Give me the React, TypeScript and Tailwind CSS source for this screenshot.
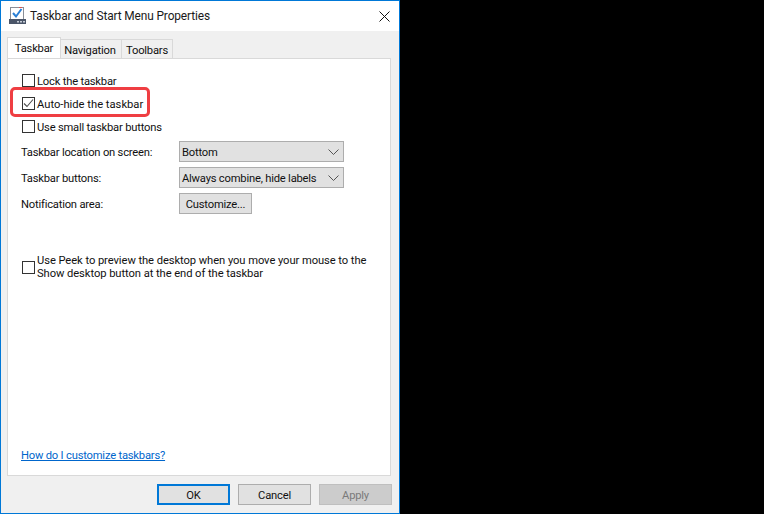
import React from 'react';

const Checkbox = ({ checked = false }: { checked?: boolean }) => (
  <span className="flex h-[13px] w-[13px] shrink-0 items-center justify-center border border-[#333333] bg-white">
    {checked && (
      <svg width="11" height="11" viewBox="0 0 11 11" fill="none" stroke="#4d4d4d" strokeWidth="1.1">
        <path d="M1 5.5 L4 8.5 L10 1.5" />
      </svg>
    )}
  </span>
);

const CheckRow = ({ label, checked, labelClass }: { label: string; checked?: boolean; labelClass?: string }) => (
  <div className="flex h-[13px] items-center gap-[2px] pl-[14px]">
    <Checkbox checked={checked} />
    <span className={`whitespace-nowrap pt-[2px] ${labelClass ?? ''}`}>{label}</span>
  </div>
);

const Chevron = () => (
  <svg width="11" height="6" viewBox="0 0 11 6" fill="none" stroke="#555555" strokeWidth="1">
    <path d="M0.5 0.5 L5.5 5.5 L10.5 0.5" />
  </svg>
);

const Select = ({ value }: { value: string }) => (
  <div className="flex h-[21px] w-[165px] items-center justify-between border border-[#adadad] bg-[#e1e1e1] pl-[2px] pr-[4px]">
    <span className="whitespace-nowrap pt-[1px]">{value}</span>
    <Chevron />
  </div>
);

const FormRow = ({ label, children }: { label: string; children: React.ReactNode }) => (
  <div className="flex h-[21px] items-center pl-[13px]">
    <span className="w-[158px] whitespace-nowrap pt-[2px]">{label}</span>
    {children}
  </div>
);

const FooterButton = ({ label, className }: { label: string; className: string }) => (
  <div className={`flex h-[21px] w-[73px] items-center justify-center pt-[1px] ${className}`}>{label}</div>
);

const App: React.FC = () => {
  return (
    <div className="flex h-[514px] w-[764px] bg-black text-[11.2px] leading-[13px] tracking-[-0.2px] text-[#111111] [font-family:'Roboto','Open_Sans',sans-serif]">
      <div className="flex h-full w-[400px] flex-col border border-[#0078d7] bg-[#f0f0f0]">
        {/* Title bar */}
        <div className="flex h-[30px] shrink-0 items-center bg-white pl-[8px] pr-[9px]">
          <svg width="18" height="18" viewBox="0 0 18 18" className="shrink-0">
            <rect x="1.5" y="0.5" width="13" height="12" fill="#ffffff" stroke="#8a8f98" />
            <rect x="10" y="0" width="3" height="1" fill="#d9534f" />
            <path d="M4 6 L7 9.5 L12.5 2" fill="none" stroke="#2a7fd5" strokeWidth="2" />
            <rect x="0" y="12" width="17" height="5" fill="#4a5568" />
            <rect x="8" y="14" width="2" height="1.5" fill="#c5ccd6" />
            <rect x="11" y="14" width="2" height="1.5" fill="#c5ccd6" />
            <rect x="14" y="14" width="2" height="1.5" fill="#c5ccd6" />
          </svg>
          <span className="ml-[3px] text-[11.9px] tracking-[-0.12px] text-[#1a1a1a]">Taskbar and Start Menu Properties</span>
          <svg width="11" height="11" viewBox="0 0 11 11" stroke="#111111" strokeWidth="1" className="ml-auto">
            <path d="M0.5 0.5 L10.5 10.5 M10.5 0.5 L0.5 10.5" />
          </svg>
        </div>

        {/* Tabs */}
        <div className="relative z-10 mt-[6px] flex h-[21px] items-end pl-[6px]">
          <div className="flex h-[21px] w-[54px] items-center justify-center border border-b-0 border-[#d9d9d9] bg-white">
            Taskbar
          </div>
          <div className="flex h-[19px] w-[61px] items-center justify-center border border-b-0 border-l-0 border-[#d9d9d9] bg-[#f0f0f0] pr-[2px] pt-[2px]">
            Navigation
          </div>
          <div className="flex h-[19px] w-[51px] items-center justify-center border border-b-0 border-l-0 border-[#d9d9d9] bg-[#f0f0f0] pt-[2px]">
            Toolbars
          </div>
        </div>

        {/* Panel */}
        <div className="relative ml-[6px] mr-[8px] flex h-[418px] flex-col border border-[#d9d9d9] bg-white pt-[15px]">
          <div className="flex flex-col gap-[10px]">
            <CheckRow label="Lock the taskbar" />
            <CheckRow label="Auto-hide the taskbar" checked labelClass="tracking-normal" />
            <CheckRow label="Use small taskbar buttons" />
          </div>
          <div className="mt-[8px] flex flex-col gap-[5px]">
            <FormRow label="Taskbar location on screen:">
              <Select value="Bottom" />
            </FormRow>
            <FormRow label="Taskbar buttons:">
              <Select value="Always combine, hide labels" />
            </FormRow>
            <FormRow label="Notification area:">
              <div className="flex h-[21px] w-[73px] items-center justify-center border border-[#adadad] bg-[#e1e1e1] pt-[1px]">
                Customize...
              </div>
            </FormRow>
          </div>
          <div className="mt-[40px] flex items-center gap-[2px] pl-[14px]">
            <Checkbox />
            <span className="w-[340px] tracking-[-0.07px]">
              Use Peek to preview the desktop when you move your mouse to the Show desktop button at the end of the taskbar
            </span>
          </div>
          <a className="mb-[13px] mt-auto pl-[13px] text-[#0066cc] underline" href="#">
            How do I customize taskbars?
          </a>
          {/* Red highlight */}
          <div className="absolute left-[2px] top-[28px] h-[30px] w-[140px] rounded-[5px] border-[3px] border-[#ef3e42]" />
        </div>

        {/* Footer */}
        <div className="ml-[156px] mt-[8px] flex gap-[8px]">
          <FooterButton label="OK" className="border-2 border-[#0078d7] bg-[#e1e1e1]" />
          <FooterButton label="Cancel" className="border border-[#adadad] bg-[#e1e1e1]" />
          <FooterButton label="Apply" className="border border-[#bfbfbf] bg-[#cccccc] text-[#7a7a7a]" />
        </div>
      </div>
    </div>
  );
};

export default App;
